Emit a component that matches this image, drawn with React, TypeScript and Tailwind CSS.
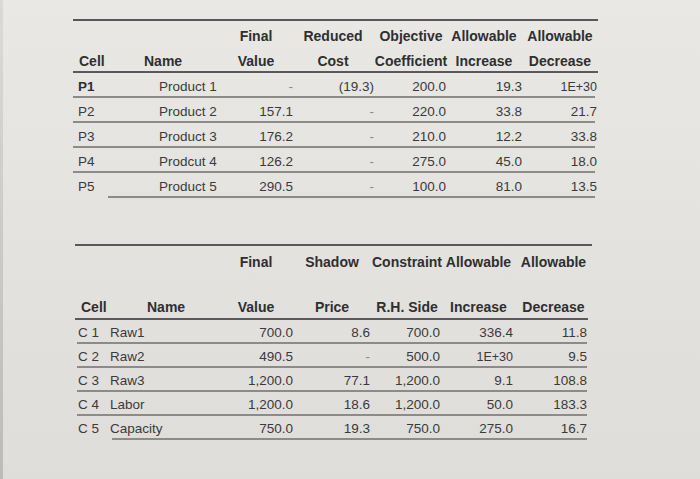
import React from "react";

const font = { fontFamily: '"Liberation Sans", Arial, sans-serif' };

type TopRow = { cell: string; name: string; fv: string; rc: string; oc: string; ai: string; ad: string; bold?: boolean };
const topRows: TopRow[] = [
  { cell: "P1", name: "Product 1", fv: "-", rc: "(19.3)", oc: "200.0", ai: "19.3", ad: "1E+30", bold: true },
  { cell: "P2", name: "Product 2", fv: "157.1", rc: "-", oc: "220.0", ai: "33.8", ad: "21.7" },
  { cell: "P3", name: "Product 3", fv: "176.2", rc: "-", oc: "210.0", ai: "12.2", ad: "33.8" },
  { cell: "P4", name: "Prodcut 4", fv: "126.2", rc: "-", oc: "275.0", ai: "45.0", ad: "18.0" },
  { cell: "P5", name: "Product 5", fv: "290.5", rc: "-", oc: "100.0", ai: "81.0", ad: "13.5" },
];

type BotRow = { cell: string; name: string; fv: string; sp: string; rh: string; ai: string; ad: string };
const botRows: BotRow[] = [
  { cell: "C 1", name: "Raw1", fv: "700.0", sp: "8.6", rh: "700.0", ai: "336.4", ad: "11.8" },
  { cell: "C 2", name: "Raw2", fv: "490.5", sp: "-", rh: "500.0", ai: "1E+30", ad: "9.5" },
  { cell: "C 3", name: "Raw3", fv: "1,200.0", sp: "77.1", rh: "1,200.0", ai: "9.1", ad: "108.8" },
  { cell: "C 4", name: "Labor", fv: "1,200.0", sp: "18.6", rh: "1,200.0", ai: "50.0", ad: "183.3" },
  { cell: "C 5", name: "Capacity", fv: "750.0", sp: "19.3", rh: "750.0", ai: "275.0", ad: "16.7" },
];

const topCols = "grid grid-cols-[67px_82px_74px_80px_72px_76px_74px]";
const botCols = "grid grid-cols-[32px_115px_74px_76px_70px_73px_77px]";

function Dash({ v }: { v: string }) {
  if (v === "-") return <span className="text-[#8c8a87]">-</span>;
  return <>{v}</>;
}

export default function App() {
  return (
    <div
      style={font}
      className="relative w-[700px] h-[479px] overflow-hidden bg-linear-to-b from-[#e9e8e5] to-[#dfddda] text-[#3a3a3a] flex"
    >
      <div className="w-[3px] h-full bg-linear-to-b from-[#dcdad7] to-[#bdbbb8]" />
      <div className="flex flex-col pt-[19px] pl-[70px]">
        {/* Top table */}
        <div className="w-[525px]">
          <div className="h-[2px] bg-[#58575a]" />
          <div className={`${topCols} pt-[7px] pb-[1px] text-[14px] font-bold leading-[17px] text-[#2f2f30]`}>
            <div className="flex flex-col justify-end pl-[6px]">Cell</div>
            <div className="flex flex-col justify-end pl-[4px]">Name</div>
            <div className="flex flex-col items-center gap-[8px] pr-[6px]"><span>Final</span><span>Value</span></div>
            <div className="flex flex-col items-center gap-[8px] pr-[6px]"><span>Reduced</span><span>Cost</span></div>
            <div className="flex flex-col items-center gap-[8px] pr-[2px] whitespace-nowrap"><span>Objective</span><span>Coefficient</span></div>
            <div className="flex flex-col items-center gap-[8px] pr-[4px]"><span>Allowable</span><span>Increase</span></div>
            <div className="flex flex-col items-center gap-[8px] pr-[2px]"><span>Allowable</span><span>Decrease</span></div>
          </div>
          <div className="h-[2px] bg-[#5a595b]" />
          {topRows.map((r, i) => (
            <div key={r.cell}>
              <div className={`${topCols} h-[23px] pt-[6px] text-[13.5px] leading-[16px]`}>
                <div className={`pl-[5px] ${r.bold ? "font-bold text-[#2f2f30]" : ""}`}>{r.cell}</div>
                <div className="pl-[19px] whitespace-nowrap">{r.name}</div>
                <div className="text-right pr-[3px]"><Dash v={r.fv} /></div>
                <div className="text-right pr-[2px]"><Dash v={r.rc} /></div>
                <div className="text-right pr-[2px]">{r.oc}</div>
                <div className="text-right pr-[2px]">{r.ai}</div>
                <div className={`text-right pr-[1px] ${r.ad === "1E+30" ? "text-[12.5px]" : ""}`}>{r.ad}</div>
              </div>
              <div className={`h-[2px] bg-[#8d8b89] mr-[3px] ${i === topRows.length - 1 ? "ml-[35px]" : ""}`} />
            </div>
          ))}
        </div>

        {/* Bottom table */}
        <div className="w-[517px] mt-[46px] ml-[2px]">
          <div className="h-[2px] bg-[#58575a]" />
          <div className={`${botCols} pt-[8px] pb-[2px] text-[14px] font-bold leading-[17px] text-[#2f2f30]`}>
            <div className="flex flex-col justify-end pl-[6px]">Cell</div>
            <div className="flex flex-col justify-end pl-[40px]">Name</div>
            <div className="flex flex-col items-center gap-[28px] pr-[6px]"><span>Final</span><span>Value</span></div>
            <div className="flex flex-col items-center gap-[28px] pr-[4px]"><span>Shadow</span><span>Price</span></div>
            <div className="flex flex-col items-center gap-[28px] whitespace-nowrap"><span>Constraint</span><span>R.H. Side</span></div>
            <div className="flex flex-col items-center gap-[28px]"><span>Allowable</span><span>Increase</span></div>
            <div className="flex flex-col items-center gap-[28px]"><span>Allowable</span><span>Decrease</span></div>
          </div>
          <div className="h-[2px] bg-[#5a595b] mr-[4px]" />
          {botRows.map((r, i) => (
            <div key={r.cell}>
              <div className={`${botCols} h-[22px] pt-[5px] text-[13.5px] leading-[16px]`}>
                <div className="pl-[3px] whitespace-nowrap">{r.cell}</div>
                <div className="pl-[3px] whitespace-nowrap">{r.name}</div>
                <div className="text-right pr-[3px]">{r.fv}</div>
                <div className="text-right pr-[2px]"><Dash v={r.sp} /></div>
                <div className="text-right pr-[2px]">{r.rh}</div>
                <div className={`text-right pr-[2px] ${r.ai === "1E+30" ? "text-[12.5px]" : ""}`}>{r.ai}</div>
                <div className="text-right pr-[5px]">{r.ad}</div>
              </div>
              <div className={`h-[2px] bg-[#8d8b89] mr-[5px] ${i === botRows.length - 1 ? "ml-[37px]" : "ml-[2px]"}`} />
            </div>
          ))}
        </div>
      </div>
    </div>
  );
}
